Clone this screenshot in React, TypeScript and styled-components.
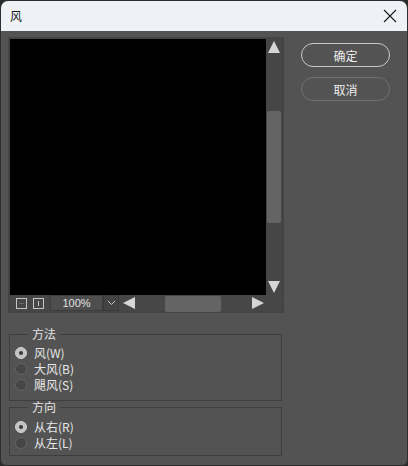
import React, { useState } from 'react';
import styled, { createGlobalStyle } from 'styled-components';

const GlobalStyle = createGlobalStyle`
  html, body { margin: 0; padding: 0; background: #2b2b2b; }
  body { font-family: "Noto Sans CJK SC", "Noto Sans", sans-serif; }
`;

const methods = [
  { key: 'wind', label: '风(W)' },
  { key: 'blast', label: '大风(B)' },
  { key: 'stagger', label: '飓风(S)' },
];

const directions = [
  { key: 'right', label: '从右(R)' },
  { key: 'left', label: '从左(L)' },
];

const Triangle: React.FC<{ dir: 'up' | 'down' | 'left' | 'right' }> = ({ dir }) => {
  const pts = {
    up: '6,0 12,12 0,12',
    down: '0,0 12,0 6,12',
    left: '12,0 12,12 0,6',
    right: '0,0 12,6 0,12',
  }[dir];
  return (
    <svg width="12" height="12" viewBox="0 0 12 12">
      <polygon points={pts} fill="#d6d6d6" />
    </svg>
  );
};

const App: React.FC = () => {
  const [method, setMethod] = useState('wind');
  const [direction, setDirection] = useState('right');

  return (
    <>
      <GlobalStyle />
      <Window>
        <TitleBar>
          <Title>风</Title>
          <CloseButton aria-label="关闭">
            <svg width="14" height="14" viewBox="0 0 14 14">
              <path d="M1 1 L13 13 M13 1 L1 13" stroke="#1a1a1a" strokeWidth="1.1" />
            </svg>
          </CloseButton>
        </TitleBar>

        <Body>
          <LeftColumn>
            <PreviewFrame>
              <Canvas />
              <VScroll>
                <ArrowCell><Triangle dir="up" /></ArrowCell>
                <VTrack>
                  <VThumb />
                </VTrack>
                <ArrowCell><Triangle dir="down" /></ArrowCell>
              </VScroll>
              <BottomBar>
                <MiniIcon><span /></MiniIcon>
                <MiniIcon $plus><span /></MiniIcon>
                <ZoomField>
                  <ZoomValue>100%</ZoomValue>
                  <ZoomDrop>
                    <svg width="9" height="6" viewBox="0 0 9 6">
                      <path d="M1 1 L4.5 4.5 L8 1" stroke="#c8c8c8" fill="none" strokeWidth="1" />
                    </svg>
                  </ZoomDrop>
                </ZoomField>
                <HScroll>
                  <ArrowCell><Triangle dir="left" /></ArrowCell>
                  <HTrack>
                    <HThumb />
                  </HTrack>
                  <ArrowCell><Triangle dir="right" /></ArrowCell>
                </HScroll>
              </BottomBar>
              <Corner />
            </PreviewFrame>

            <Group>
              <Legend>方法</Legend>
              {methods.map(m => (
                <RadioRow key={m.key} onClick={() => setMethod(m.key)}>
                  <RadioDot $checked={method === m.key} />
                  <RadioLabel>{m.label}</RadioLabel>
                </RadioRow>
              ))}
            </Group>

            <Group $compact>
              <Legend>方向</Legend>
              {directions.map(d => (
                <RadioRow key={d.key} onClick={() => setDirection(d.key)}>
                  <RadioDot $checked={direction === d.key} />
                  <RadioLabel>{d.label}</RadioLabel>
                </RadioRow>
              ))}
            </Group>
          </LeftColumn>

          <RightColumn>
            <DialogButton $primary>确定</DialogButton>
            <DialogButton>取消</DialogButton>
          </RightColumn>
        </Body>
      </Window>
    </>
  );
};

// --- STYLED COMPONENTS ---
const Window = styled.div`
  width: 408px; height: 466px; box-sizing: border-box;
  background: #535353; border: 1px solid #2e2e2e; border-radius: 8px 8px 6px 6px;
  overflow: hidden; display: flex; flex-direction: column;
`;

const TitleBar = styled.div`
  height: 30px; flex-shrink: 0; background: #eef2f7;
  display: flex; align-items: center; justify-content: space-between; padding: 0 8px 0 9px;
`;

const Title = styled.span`
  font-size: 12px; color: #1a1a1a; line-height: 1;
`;

const CloseButton = styled.button`
  background: none; border: none; padding: 0; width: 16px; height: 16px;
  display: flex; align-items: center; justify-content: center; margin-right: 1px;
`;

const Body = styled.div`
  display: flex; gap: 16px; padding: 6px 0 0 7px;
`;

const LeftColumn = styled.div`
  width: 277px; display: flex; flex-direction: column;
`;

const RightColumn = styled.div`
  display: flex; flex-direction: column; gap: 10px; padding-top: 6px;
`;

const PreviewFrame = styled.div`
  width: 276px; height: 276px; box-sizing: border-box; border: 2px solid #444;
  display: grid; grid-template-columns: 256px 16px; grid-template-rows: 256px 16px;
`;

const Canvas = styled.div`background: #000;`;

const VScroll = styled.div`
  background: #464646; display: flex; flex-direction: column;
`;

const ArrowCell = styled.div`
  width: 16px; height: 16px; flex-shrink: 0; display: flex; align-items: center; justify-content: center;
`;

const VTrack = styled.div`
  flex: 1; padding: 56px 1px 56px 1px;
  display: flex;
`;

const VThumb = styled.div`
  flex: 1; background: #646464; border-radius: 2px;
`;

const BottomBar = styled.div`
  background: #474747; display: flex; align-items: center; padding-left: 6px;
`;

const MiniIcon = styled.div<{ $plus?: boolean }>`
  width: 11px; height: 11px; box-sizing: border-box; border: 1px solid #c4c4c4; margin-right: 6px;
  display: flex; align-items: center; justify-content: center;
  span { display: block; width: ${({ $plus }) => $plus ? '1px' : '5px'}; height: ${({ $plus }) => $plus ? '5px' : '1px'}; background: ${({ $plus }) => $plus ? '#c4c4c4' : '#6a6a6a'}; }
`;

const ZoomField = styled.div`
  height: 16px; width: 69px; margin-left: 0; display: flex; box-sizing: border-box;
`;

const ZoomValue = styled.div`
  width: 53px; background: #4e4e4e; border: 1px solid #3d3d3d; box-sizing: border-box;
  color: #e2e2e2; font-family: "Liberation Sans", Arial, sans-serif; font-size: 11px;
  display: flex; align-items: center; justify-content: center;
`;

const ZoomDrop = styled.div`
  width: 16px; background: #434343; border: 1px solid #3a3a3a; box-sizing: border-box;
  display: flex; align-items: center; justify-content: center;
`;

const HScroll = styled.div`
  flex: 1; display: flex; align-items: center; padding-left: 2px; height: 16px;
`;

const HTrack = styled.div`
  flex: 1; height: 16px; padding: 1px 29px 0 28px; display: flex;
`;

const HThumb = styled.div`
  flex: 1; background: #646464; border-radius: 2px;
`;

const Corner = styled.div`background: #474747;`;

const Group = styled.fieldset<{ $compact?: boolean }>`
  margin: ${({ $compact }) => $compact ? '0 0 0 1px' : '15px 0 0 1px'};
  width: 273px; box-sizing: border-box;
  border: 1px solid #3e3e3e;
  padding: ${({ $compact }) => $compact ? '6px 0 4px 5px' : '5px 0 7px 5px'};
`;

const Legend = styled.legend`
  margin-left: 13px; padding: 0 4px; font-size: 12px; line-height: 12px; color: #e4e4e4;
`;

const RadioRow = styled.label`
  display: flex; align-items: center; height: 16px; cursor: pointer;
`;

const RadioDot = styled.span<{ $checked?: boolean }>`
  width: 12px; height: 12px; border-radius: 50%; box-sizing: border-box; margin-right: 7px;
  background: ${({ $checked }) => $checked ? '#c4c4c4' : '#464646'};
  border: 1px solid ${({ $checked }) => $checked ? '#d0d0d0' : '#646464'};
  display: flex; align-items: center; justify-content: center;
  &::after {
    content: ''; width: 4px; height: 4px; border-radius: 50%;
    background: ${({ $checked }) => $checked ? '#3a3a3a' : 'transparent'};
  }
`;

const RadioLabel = styled.span`
  font-size: 12px; color: #e6e6e6; line-height: 16px;
`;

const DialogButton = styled.button<{ $primary?: boolean }>`
  width: 89px; height: 24px; border-radius: 12px; background: transparent;
  border: ${({ $primary }) => $primary ? '1.5px solid #c9c9c9' : '1px solid #717171'};
  color: #eeeeee; font-family: "Noto Sans CJK SC", sans-serif; font-size: 12px; padding: 0;
  display: flex; align-items: center; justify-content: center;
`;

export default App;
